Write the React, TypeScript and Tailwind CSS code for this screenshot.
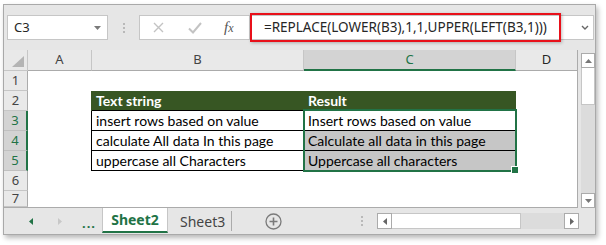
import React from "react";

function Tri({ dir, color, w = 5, h = 7 }: { dir: "l" | "r" | "u" | "d"; color: string; w?: number; h?: number }) {
  let pts = "";
  if (dir === "l") pts = `${w},0 0,${h / 2} ${w},${h}`;
  if (dir === "r") pts = `0,0 ${w},${h / 2} 0,${h}`;
  if (dir === "u") pts = `0,${h} ${w / 2},0 ${w},${h}`;
  if (dir === "d") pts = `0,0 ${w},0 ${w / 2},${h}`;
  return (
    <svg width={w} height={h} viewBox={`0 0 ${w} ${h}`} className="block">
      <polygon points={pts} fill={color} />
    </svg>
  );
}

function VDots({ color }: { color: string }) {
  return (
    <div className="flex flex-col gap-[2px]">
      <div className={`w-[2px] h-[2px] ${color}`} />
      <div className={`w-[2px] h-[2px] ${color}`} />
      <div className={`w-[2px] h-[2px] ${color}`} />
    </div>
  );
}

function FormulaBar() {
  return (
    <div className="h-[45px] flex items-start pt-[10px] pl-[3px] pr-[1px] shrink-0">
      <div className="w-[101px] h-[25px] bg-white border border-[#c6c6c6] flex items-center justify-between pl-[6px] pr-[6px] text-[13px] text-[#262626]">
        <span>C3</span>
        <Tri dir="d" color="#7a7a7a" w={7} h={4} />
      </div>
      <div className="w-[31px] h-[25px] flex items-center justify-center">
        <div className="flex flex-col gap-[2px]">
          <div className="w-[2px] h-[2px] bg-[#b9b9b9]" />
          <div className="w-[2px] h-[2px] bg-[#b9b9b9]" />
          <div className="w-[2px] h-[2px] bg-[#b9b9b9]" />
        </div>
      </div>
      <div className="w-[111px] h-[25px] bg-white border border-[#c6c6c6] flex items-center">
        <svg width="11" height="11" viewBox="0 0 11 11" className="ml-[13px]">
          <path d="M1 1 L10 10 M10 1 L1 10" stroke="#c3c3c3" strokeWidth="1.4" fill="none" />
        </svg>
        <svg width="14" height="12" viewBox="0 0 14 12" className="ml-[24px]">
          <path d="M1 6.5 L5 10.5 L13 1" stroke="#c3c3c3" strokeWidth="2" fill="none" />
        </svg>
        <span className="ml-[22px] font-['Liberation_Serif',serif] italic text-[15px] text-[#555] leading-none">
          f<span className="text-[12px]">x</span>
        </span>
      </div>
      <div className="flex-1 h-[25px] bg-white border border-[#c6c6c6] relative flex items-center justify-between pl-[13px] pr-[4px]">
        <div className="absolute -left-px -top-[3px] w-[311px] h-[29px] border-[2px] border-[#e8101a] shadow-[1px_1px_3px_rgba(0,0,0,0.25)]" />
        <span className="text-[13.5px] text-[#262626] font-['Noto_Sans',sans-serif]">=REPLACE(LOWER(B3),1,1,UPPER(LEFT(B3,1)))</span>
        <svg width="8" height="5" viewBox="0 0 8 5">
          <path d="M1 1 L4 4 L7 1" stroke="#666" strokeWidth="1.4" fill="none" />
        </svg>
      </div>
    </div>
  );
}

const rows: Record<number, [string, string]> = {
  2: ["Text string", "Result"],
  3: ["insert rows based on value", "Insert rows based on value"],
  4: ["calculate All data In this page", "Calculate all data in this page"],
  5: ["uppercase all Characters", "Uppercase all characters"],
};

function RowCells({ r }: { r: number }) {
  const sel = r >= 3 && r <= 5;
  const d = rows[r];
  const cellText = "font-['Lato',sans-serif] text-[14px] flex items-center pl-[4px] whitespace-nowrap overflow-hidden";
  return (
    <>
      <div
        className={
          sel
            ? "bg-[#d3d3d3] text-[#217346] border-b border-b-[#c0c0c0] border-r-2 border-r-[#217346] flex items-center justify-center text-[13px]"
            : "bg-[#e9e9e9] text-[#444] border-b border-b-[#c6c6c6] border-r border-r-[#ababab] flex items-center justify-center text-[13px]"
        }
      >
        {r}
      </div>
      <div
        className={
          sel
            ? "bg-white border-r border-r-black"
            : r === 2
            ? "bg-white border-r border-r-[#375623]"
            : "bg-white"
        }
      />
      {r === 2 ? (
        <>
          <div className={`${cellText} bg-[#375623] text-white font-bold border-b border-b-black`}>{d[0]}</div>
          <div className={`${cellText} bg-[#375623] text-white font-bold border-b border-b-black`}>{d[1]}</div>
        </>
      ) : sel ? (
        <>
          <div className={`${cellText} bg-white text-black border-b border-r border-black`}>{d[0]}</div>
          <div
            className={
              r === 3
                ? `${cellText} bg-white text-black border-b border-r border-black`
                : `${cellText} bg-[#c6c6c6] text-black border-b border-r border-black`
            }
          >
            {d[1]}
          </div>
        </>
      ) : (
        <>
          <div className="bg-white" />
          <div className="bg-white" />
        </>
      )}
      <div className="bg-white" />
    </>
  );
}

function Sheet() {
  return (
    <div className="h-[158px] flex shrink-0">
      <div className="relative w-[574px] border-r border-b border-[#ababab] grid grid-cols-[24px_64px_212px_212px_61px] grid-rows-[21px_repeat(6,20px)_16px] font-['Noto_Sans',sans-serif] overflow-hidden">
        <div className="bg-[#e9e9e9] border-r border-b border-[#c6c6c6] flex items-end justify-end pr-[3px] pb-[3px]">
          <svg width="12" height="11" viewBox="0 0 12 11">
            <polygon points="12,0 12,11 0,11" fill="#b4b4b4" />
          </svg>
        </div>
        <div className="bg-[#e9e9e9] border-r border-b border-r-[#c6c6c6] border-b-[#ababab] flex items-center justify-center text-[13px] text-[#444]">A</div>
        <div className="bg-[#e9e9e9] border-r border-b border-r-[#c6c6c6] border-b-[#ababab] flex items-center justify-center text-[13px] text-[#444]">B</div>
        <div className="bg-[#d3d3d3] border-r border-r-[#c6c6c6] border-b-2 border-b-[#217346] flex items-center justify-center text-[13px] text-[#217346]">C</div>
        <div className="bg-[#e9e9e9] border-b border-b-[#ababab] flex items-center justify-center text-[13px] text-[#262626]">D</div>
        {[1, 2, 3, 4, 5, 6, 7].map((r) => (
          <RowCells key={r} r={r} />
        ))}
        <div className="absolute left-[299px] top-[59px] w-[214px] h-[63px] border-2 border-[#217346]" />
        <div className="absolute left-[507px] top-[116px] w-[8px] h-[8px] bg-[#217346] border border-white" />
      </div>
      <div className="w-[17px] flex flex-col pl-[3px] pt-[3px]">
        <div className="flex-1 flex flex-col bg-[#dcdcdc]">
          <div className="h-[15px] bg-white border border-[#ababab] flex items-center justify-center">
            <Tri dir="u" color="#777" w={7} h={4} />
          </div>
          <div className="h-[37px] bg-white border-x border-b border-[#c6c6c6]" />
          <div className="flex-1" />
          <div className="h-[15px] bg-white border border-[#ababab] flex items-center justify-center">
            <Tri dir="d" color="#777" w={7} h={4} />
          </div>
        </div>
      </div>
    </div>
  );
}

function TabBar() {
  return (
    <div className="h-[26px] flex items-stretch shrink-0 font-['Noto_Sans',sans-serif]">
      <div className="w-[98px] flex items-center pl-[25px]">
        <Tri dir="l" color="#217346" w={4} h={7} />
        <div className="ml-[25px]">
          <Tri dir="r" color="#c8c8c8" w={4} h={7} />
        </div>
        <span className="ml-[20px] text-[13px] font-bold text-[#217346] leading-none pt-[4px] tracking-[1px]">...</span>
      </div>
      <div className="w-[66px] h-[25px] bg-white border-x border-[#c6c6c6] border-b-2 border-b-[#217346] flex items-center justify-center text-[14px] font-bold text-[#217346]">
        Sheet2
      </div>
      <div className="w-[63px] flex items-center pl-[12px] text-[14px] text-[#444]">Sheet3</div>
      <div className="w-px h-[20px] bg-[#ababab] self-center" />
      <div className="ml-[33px] self-center">
        <svg width="17" height="17" viewBox="0 0 17 17" className="block">
          <circle cx="8.5" cy="8.5" r="7.5" stroke="#7a7a7a" strokeWidth="1.3" fill="none" />
          <path d="M8.5 4.5 V12.5 M4.5 8.5 H12.5" stroke="#7a7a7a" strokeWidth="1.6" />
        </svg>
      </div>
      <div className="ml-[79px] self-center">
        <div className="flex flex-col gap-[2px]">
          <div className="w-[2px] h-[2px] bg-[#b9b9b9]" />
          <div className="w-[2px] h-[2px] bg-[#b9b9b9]" />
          <div className="w-[2px] h-[2px] bg-[#b9b9b9]" />
        </div>
      </div>
      <div className="ml-[14px] w-[202px] h-[16px] self-center flex bg-[#dcdcdc]">
        <div className="w-[15px] bg-white border border-[#ababab] flex items-center justify-center">
          <Tri dir="l" color="#666" w={4} h={7} />
        </div>
        <div className="w-[129px] bg-white border-y border-r border-[#c6c6c6]" />
        <div className="flex-1" />
        <div className="w-[15px] bg-white border border-[#ababab] flex items-center justify-center">
          <Tri dir="r" color="#666" w={4} h={7} />
        </div>
      </div>
    </div>
  );
}

export default function App() {
  return (
    <div className="w-[606px] h-[245px] bg-white overflow-hidden pt-[4px] pl-[3px]">
      <div className="w-[593px] h-[231px] bg-[#e6e6e6] border border-[#a9a9a9] shadow-[2px_3px_5px_rgba(0,0,0,0.28)] flex flex-col font-['Noto_Sans',sans-serif]">
        <FormulaBar />
        <Sheet />
        <TabBar />
      </div>
    </div>
  );
}
